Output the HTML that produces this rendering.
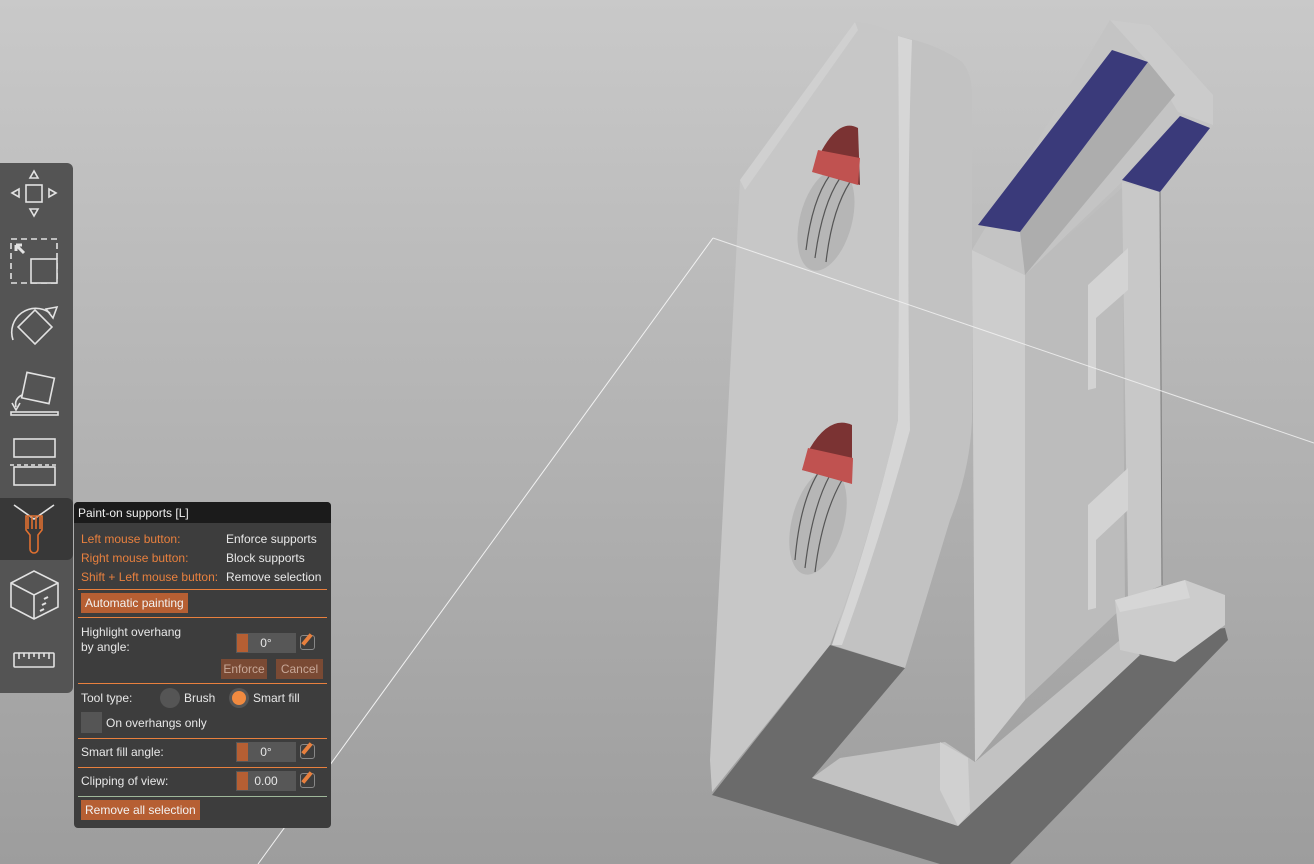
<!DOCTYPE html>
<html><head><meta charset="utf-8"><style>
*{margin:0;padding:0;box-sizing:border-box}
body{width:1314px;height:864px;overflow:hidden;position:relative;background:linear-gradient(#c9c9c9,#9d9d9d);font-family:"Liberation Sans","DejaVu Sans",sans-serif;}
svg.scene{position:absolute;left:0;top:0}
#tb{position:absolute;left:0;top:163px;width:73px;height:530px;background:#545454;border-radius:0 6px 6px 0}
#act{position:absolute;left:0;top:498px;width:73px;height:62px;background:#383838;border-radius:0 6px 6px 0}
#panel{position:absolute;left:74px;top:502px;width:257px;height:326px;background:#3d3d3d;border-radius:4px;color:#e8e8e8;font-size:12px}
#hd{height:21px;background:#1b1b1b;border-radius:4px 4px 0 0;padding:4px 0 0 4px;font-size:12px;color:#f0f0f0}
.t{position:absolute;white-space:nowrap}
.o{color:#e8803e}
.sep{position:absolute;left:4px;width:249px;height:1px;background:#e8803e}
.btn{position:absolute;background:#b65f33;color:#f2f2f2;padding:3px 4px;height:20px;font-size:12px}
.btn2{position:absolute;background:#7a4a34;color:#c8a898;height:20px;font-size:12px;text-align:center;padding-top:3px}
.inp{position:absolute;width:60px;height:20px;background:#575757;left:162px}
.inp i{position:absolute;left:1px;top:1px;width:11px;height:18px;background:#b65f33}
.inp span{position:absolute;left:0;right:0;top:3px;text-align:center;font-style:normal}
.ed{position:absolute;left:226px;width:15px;height:15px;border:1.5px solid #888;border-radius:3px}
.ed:after{content:"";position:absolute;left:4px;top:-3px;width:4px;height:13px;background:#e8803e;transform:rotate(40deg)}
</style></head><body>
<svg class="scene" width="1314" height="864">
<!-- dark base -->
<polygon points="712,795 830,645 905,668 812,778 958,826 1120,640 1225,628 1228,640 1010,864 940,864" fill="#6b6b6b"/>
<!-- inner floor -->
<polygon points="812,778 840,758 945,742 975,762 1120,640 1140,655 958,826" fill="#c2c2c2"/>
<polygon points="940,742 968,758 970,812 958,826 940,790" fill="#d0d0d0"/>
<!-- right body -->
<polygon points="972,250 1025,275 1025,700 975,762" fill="#cdcdcd"/>
<polygon points="1025,275 1122,188 1125,605 1025,700" fill="#bcbcbc"/>
<polygon points="1122,182 1160,192 1162,585 1128,600" fill="#c8c8c8"/>
<line x1="1160" y1="192" x2="1162" y2="585" stroke="#777" stroke-width="1"/>
<polygon points="1088,285 1128,248 1128,290 1096,318 1096,388 1088,390" fill="#d3d3d3"/>
<polygon points="1088,505 1128,468 1128,510 1096,540 1096,608 1088,610" fill="#d3d3d3"/>
<!-- top angled part -->
<polygon points="972,250 1110,20 1150,25 1213,95 1213,125 1160,192 1122,182 1025,275" fill="#c4c4c4"/>
<polygon points="1110,20 1150,25 1213,95 1213,125 1178,112 1148,62" fill="#cbcbcb"/>
<polygon points="1020,232 1148,62 1175,95 1025,275" fill="#adadad"/>
<polygon points="978,225 1112,50 1148,62 1020,232" fill="#3a3a7a"/>
<polygon points="1122,180 1180,116 1210,128 1160,192" fill="#3a3a7a"/>
<!-- foot -->
<polygon points="1115,600 1185,580 1225,595 1225,625 1175,662 1120,650" fill="#cccccc"/>
<polygon points="1115,600 1185,580 1190,598 1120,612" fill="#d6d6d6"/>
<!-- side rim of front plate -->
<path d="M898,36 Q940,45 962,62 Q973,75 972,100 L972,420 Q970,470 950,520 L905,668 L832,645 L898,420 Z" fill="#c2c2c2"/>
<path d="M898,36 L912,40 Q906,200 910,430 Q880,540 842,645 L832,645 Q870,540 898,420 Z" fill="#d6d6d6"/>
<!-- front face -->
<path d="M740,180 L855,22 Q880,24 898,36 Q900,200 898,420 Q870,540 830,645 L712,792 L710,760 Z" fill="#c7c7c7"/>
<polygon points="740,180 855,22 858,30 745,190" fill="#d0d0d0"/>
<!-- holes -->
<g>
<ellipse cx="826" cy="220" rx="26" ry="52" transform="rotate(15 826 220)" fill="#b6b6b6"/>
<path d="M806,250 Q812,200 830,175 M815,258 Q822,205 840,178 M826,262 Q832,210 850,182" stroke="#555" stroke-width="1.2" fill="none"/>
<path d="M822,150 Q840,118 858,128 L860,185 L814,172 Z" fill="#7b3333"/>
<polygon points="818,150 860,158 858,185 812,172" fill="#c05250"/>
<ellipse cx="818" cy="522" rx="26" ry="54" transform="rotate(15 818 522)" fill="#b6b6b6"/>
<path d="M795,560 Q800,500 820,470 M805,568 Q812,508 830,475 M815,572 Q822,515 842,480" stroke="#555" stroke-width="1.2" fill="none"/>
<path d="M810,448 Q830,415 852,425 L852,482 L802,470 Z" fill="#7b3333"/>
<polygon points="808,448 853,458 852,484 802,470" fill="#c05250"/>
</g>
<line x1="713" y1="238" x2="1314" y2="443" stroke="#f2f2f2" stroke-width="1" opacity="0.85"/>
<line x1="713" y1="238" x2="258" y2="864" stroke="#f2f2f2" stroke-width="1"/>
</svg>

<div id="tb"></div>
<div id="act"></div>
<svg style="position:absolute;left:0;top:163px" width="73" height="530" fill="none" stroke="#e2e2e2" stroke-width="1.6">
<rect x="26" y="22" width="16" height="17"/>
<path d="M34 8 L30 15 L38 15 Z M34 53 L30 46 L38 46 Z M12 30 L19 26 L19 34 Z M56 30 L49 26 L49 34 Z"/>
<rect x="11" y="76" width="46" height="44" stroke-dasharray="6 4"/>
<rect x="31" y="96" width="26" height="24" fill="#545454"/>
<path d="M16 82 L24 90 M16 82 L16 88 M16 82 L22 82" stroke-width="3"/>
<rect x="23" y="152" width="24" height="24" transform="rotate(45 35 164)"/>
<path d="M13 177 A24 24 0 0 1 50 150"/><path d="M46 146 L57 144 L53 155 Z"/>
<rect x="24" y="212" width="28" height="26" transform="rotate(12 38 225)"/>
<path d="M22 232 Q14 236 16 244"/><path d="M12 240 L16 247 L20 240"/>
<rect x="11" y="249" width="47" height="3"/>
<rect x="14" y="276" width="41" height="18"/><path d="M10 302 L58 302" stroke-dasharray="4 3"/><rect x="14" y="304" width="41" height="18"/>
<path d="M14 342 L34 356 L54 342" />
<path d="M26 353 L42 353 L42 367 L38 372 L38 386 A4 4 0 0 1 30 386 L30 372 L26 367 Z M28 354 L28 366 M32 354 L32 366 M36 354 L36 366 M40 354 L40 366" stroke="#e07030"/>
<path d="M11 420 L34 408 L58 420 L58 444 L34 456 L11 444 Z M11 420 L34 432 L58 420 M34 432 L34 456"/>
<path d="M44 436 L48 434 M42 442 L46 440 M40 448 L44 446" stroke-width="2"/>
<rect x="14" y="490" width="40" height="14" rx="1"/><path d="M19 490 L19 496 M24 490 L24 494 M29 490 L29 496 M34 490 L34 494 M39 490 L39 496 M44 490 L44 494 M49 490 L49 496"/>
</svg>

<div id="panel">
<div id="hd">Paint-on supports [L]</div>
<div class="t o" style="left:7px;top:30px">Left mouse button:</div><div class="t" style="left:152px;top:30px">Enforce supports</div>
<div class="t o" style="left:7px;top:49px">Right mouse button:</div><div class="t" style="left:152px;top:49px">Block supports</div>
<div class="t o" style="left:7px;top:68px">Shift + Left mouse button:</div><div class="t" style="left:152px;top:68px">Remove selection</div>
<div class="sep" style="top:87px"></div>
<div class="btn" style="left:7px;top:91px">Automatic painting</div>
<div class="sep" style="top:115px"></div>
<div class="t" style="left:7px;top:123px;line-height:15px">Highlight overhang<br>by angle:</div>
<div class="inp" style="top:131px"><i></i><span>0°</span></div><div class="ed" style="top:133px"></div>
<div class="btn2" style="left:147px;top:157px;width:46px">Enforce</div>
<div class="btn2" style="left:202px;top:157px;width:47px">Cancel</div>
<div class="sep" style="top:181px"></div>
<div class="t" style="left:7px;top:189px">Tool type:</div>
<div style="position:absolute;left:86px;top:186px;width:20px;height:20px;border-radius:50%;background:#555"></div>
<div class="t" style="left:110px;top:189px">Brush</div>
<div style="position:absolute;left:155px;top:186px;width:20px;height:20px;border-radius:50%;background:#555"><div style="margin:3px;width:14px;height:14px;border-radius:50%;background:#f08a40"></div></div>
<div class="t" style="left:179px;top:189px">Smart fill</div>
<div style="position:absolute;left:7px;top:210px;width:21px;height:21px;background:#555"></div>
<div class="t" style="left:32px;top:214px">On overhangs only</div>
<div class="sep" style="top:236px"></div>
<div class="t" style="left:7px;top:243px">Smart fill angle:</div>
<div class="inp" style="top:240px"><i></i><span>0°</span></div><div class="ed" style="top:242px"></div>
<div class="sep" style="top:265px"></div>
<div class="t" style="left:7px;top:272px">Clipping of view:</div>
<div class="inp" style="top:269px"><i></i><span>0.00</span></div><div class="ed" style="top:271px"></div>
<div class="sep" style="top:294px;background:#9fb89a"></div>
<div class="btn" style="left:7px;top:298px">Remove all selection</div>
</div>
</body></html>
